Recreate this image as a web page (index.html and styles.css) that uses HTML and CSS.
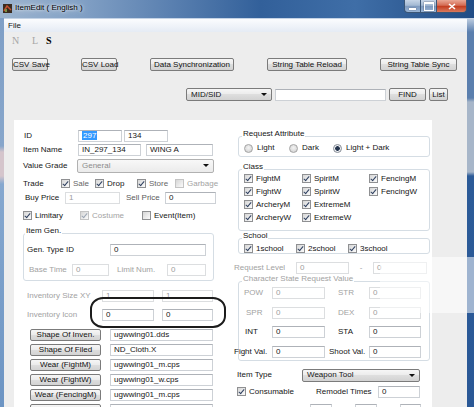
FILE: index.html
```html
<!DOCTYPE html>
<html lang="en">
<head>
<meta charset="UTF-8">
<title>ItemEdit ( English )</title>
<link rel="stylesheet" href="styles.css">
</head>
<body>
<div class="window">

  <div class="titlebar">
    <svg class="app-icon" width="9" height="9" viewBox="0 0 9 9">
      <rect width="9" height="9" fill="#3a2b1e"/>
      <path d="M1 7 L4 2 L8 6" stroke="#c4502e" stroke-width="1.5" fill="none"/>
      <rect x="2" y="5" width="2" height="3" fill="#7a8f42"/>
    </svg>
    <span class="title">ItemEdit ( English )</span>
    <div class="caption">
      <span class="cap cap-min"></span>
      <span class="cap cap-max"></span>
      <span class="cap cap-close">
        <svg width="8" height="7" viewBox="0 0 8 7"><path d="M1 1 L7 6 M7 1 L1 6" stroke="#fff" stroke-width="1.6"/></svg>
      </span>
    </div>
  </div>

  <div class="frame">
    <div class="edge-left"></div>
    <div class="client">
      <div class="menubar">File</div>
      <div class="form">

        <div class="nls"><span class="nls-off">N</span><span class="nls-off l">L</span><span class="nls-on">S</span></div>

        <div class="toolbar">
          <button class="btn w36">CSV Save</button>
          <button class="btn w36">CSV Load</button>
          <button class="btn w84">Data Synchronization</button>
          <button class="btn w80">String Table Reload</button>
          <button class="btn w77">String Table Sync</button>
        </div>

        <div class="search">
          <span class="combo w86">MID/SID</span>
          <span class="tb w111"></span>
          <button class="btn w37">FIND</button>
          <button class="btn w19">List</button>
        </div>

        <div class="panel">

          <!-- left column -->
          <div class="col">
            <div class="row">
              <span class="lbl w55 pl1">ID</span>
              <span class="tb w44"><span class="sel">297</span></span>
              <span class="tb w44 ml2">134</span>
            </div>
            <div class="row mt1">
              <span class="lbl w55">Item Name</span>
              <span class="tb w63">IN_297_134</span>
              <span class="tb w67 ml5">WING A</span>
            </div>
            <div class="row h15 mt2">
              <span class="lbl w54">Value Grade</span>
              <span class="combo dis w137 h14">General</span>
            </div>
            <div class="row mt4">
              <span class="lbl w38">Trade</span>
              <span class="chk soft w34"><i class="cb on"></i>Sale</span>
              <span class="chk w42"><i class="cb on"></i>Drop</span>
              <span class="chk soft w38"><i class="cb on"></i>Store</span>
              <span class="chk dis"><i class="cb"></i>Garbage</span>
            </div>
            <div class="row mt1">
              <span class="lbl w42 pl2">Buy Price</span>
              <span class="tb dis w55">1</span>
              <span class="lbl grey w39 ml6">Sell Price</span>
              <span class="tb w51">0</span>
            </div>
            <div class="row mt5">
              <span class="chk w57"><i class="cb on"></i>Limitary</span>
              <span class="chk dis w62"><i class="cb on"></i>Costume</span>
              <span class="chk"><i class="cb"></i>Event(Item)</span>
            </div>

            <fieldset class="group grp-l mt5">
              <legend>Item Gen.</legend>
              <div class="row mt4">
                <span class="lbl w83">Gen. Type ID</span>
                <span class="tb w96">0</span>
              </div>
              <div class="row mt7">
                <span class="lbl dim w45 pl2">Base Time</span>
                <span class="tb dis w37">0</span>
                <span class="lbl dim w50 ml8">Limit Num.</span>
                <span class="tb dis w39">0</span>
              </div>
            </fieldset>

            <div class="row mt8">
              <span class="lbl dim w79 pl4">Inventory Size XY</span>
              <span class="tb dis w52">1</span>
              <span class="tb dis w51 ml8">1</span>
            </div>
            <div class="row mt6">
              <span class="lbl dim w79 pl4">Inventory Icon</span>
              <span class="tb w52">0</span>
              <span class="tb w51 ml8">0</span>
            </div>

            <div class="row h12 mt8">
              <button class="btn h12 w71 ml7">Shape Of Inven.</button>
              <span class="tb w103 ml9">ugwwing01.dds</span>
            </div>
            <div class="row h12 mt3">
              <button class="btn h12 w71 ml7">Shape Of Filed</button>
              <span class="tb w103 ml9">ND_Cloth.X</span>
            </div>
            <div class="row h12 mt3">
              <button class="btn h12 w71 ml7">Wear (FightM)</button>
              <span class="tb w103 ml9">ugwwing01_m.cps</span>
            </div>
            <div class="row h12 mt3">
              <button class="btn h12 w71 ml7">Wear (FightW)</button>
              <span class="tb w103 ml9">ugwwing01_w.cps</span>
            </div>
            <div class="row h12 mt3">
              <button class="btn h12 w71 ml7">Wear (FencingM)</button>
              <span class="tb w103 ml9">ugwwing01_m.cps</span>
            </div>
            <div class="row h12 mt3">
              <button class="btn h12 w71 ml7"></button>
              <span class="tb w103 ml9"></span>
            </div>
          </div>

          <!-- right column -->
          <div class="col">
            <fieldset class="group grp-r mt1 pb3">
              <legend>Request Attribute</legend>
              <div class="row h10 mt1">
                <span class="chk w45"><i class="rb"></i>Light</span>
                <span class="chk w44"><i class="rb"></i>Dark</span>
                <span class="chk"><i class="rb on"></i>Light + Dark</span>
              </div>
            </fieldset>

            <fieldset class="group grp-r mt6 pb6">
              <legend>Class</legend>
              <div class="row up3">
                <span class="chk w58"><i class="cb on"></i>FightM</span>
                <span class="chk w67"><i class="cb on"></i>SpiritM</span>
                <span class="chk"><i class="cb on"></i>FencingM</span>
              </div>
              <div class="row">
                <span class="chk w58"><i class="cb on"></i>FightW</span>
                <span class="chk w67"><i class="cb on"></i>SpiritW</span>
                <span class="chk"><i class="cb on"></i>FencingW</span>
              </div>
              <div class="row">
                <span class="chk w58"><i class="cb on"></i>ArcheryM</span>
                <span class="chk w67"><i class="cb on"></i>ExtremeM</span>
              </div>
              <div class="row">
                <span class="chk w58"><i class="cb on"></i>ArcheryW</span>
                <span class="chk w67"><i class="cb on"></i>ExtremeW</span>
              </div>
            </fieldset>

            <fieldset class="group grp-r mt1 pb0">
              <legend>School</legend>
              <div class="row h9">
                <span class="chk w52"><i class="cb on"></i>1school</span>
                <span class="chk w52"><i class="cb on"></i>2school</span>
                <span class="chk"><i class="cb on"></i>3school</span>
              </div>
            </fieldset>

            <div class="row h12 mt8">
              <span class="lbl dim w62">Request Level</span>
              <span class="tb dis w53">0</span>
              <span class="lbl dim dash w24">-</span>
              <span class="tb dis w54">0</span>
            </div>

            <fieldset class="group grp-r mt1 pb2">
              <legend class="dim">Character State Request Value</legend>
              <div class="row h12">
                <span class="lbl dim w28">POW</span>
                <span class="tb dis w53">0</span>
                <span class="lbl dim w31 ml13">STR</span>
                <span class="tb dis w52">0</span>
              </div>
              <div class="row h12 mt8">
                <span class="lbl dim w28 pl2">SPR</span>
                <span class="tb dis w53">0</span>
                <span class="lbl dim w31 ml13">DEX</span>
                <span class="tb dis w52">0</span>
              </div>
              <div class="row h12 mt7">
                <span class="lbl w28 pl1">INT</span>
                <span class="tb w53">0</span>
                <span class="lbl w31 ml13">STA</span>
                <span class="tb w52">0</span>
              </div>
              <div class="row h12 mt8">
                <span class="lbl w38 out">Fight Val.</span>
                <span class="tb w53">0</span>
                <span class="lbl w40 ml4">Shoot Val.</span>
                <span class="tb w52">0</span>
              </div>
            </fieldset>

            <div class="row h14 mt7">
              <span class="lbl w68 pl3">Item Type</span>
              <span class="combo w118">Weapon Tool</span>
            </div>
            <div class="row mt3">
              <span class="chk w79 ml3"><i class="cb on"></i>Consumable</span>
              <span class="lbl w62">Remodel Times</span>
              <span class="tb w42">0</span>
            </div>
            <div class="row h12 mt6">
              <span class="tb w22 ml76">7</span>
              <span class="tb w22 ml23">0</span>
              <span class="tb w21 ml23">0</span>
            </div>
          </div>

        </div>
      </div>
    </div>
    <div class="edge-right"></div>
  </div>

  <!-- hand-drawn mark on the screenshot -->
  <div class="annotation"></div>
  <div class="watermark"></div>
</div>
</body>
</html>
```

FILE: styles.css
```css
*{
    box-sizing: border-box;
}

body{
    margin: 0;
    font-family: "Liberation Sans", Arial, sans-serif;
    font-size: 8px;
    line-height: 8px;
    color: #151515;
}

.window{
    position: relative;
    width: 474px;
    height: 407px;
    overflow: hidden;
    display: flex;
    flex-direction: column;
}

/* title bar */
.titlebar{
    height: 18px;
    flex: none;
    display: flex;
    align-items: flex-start;
    background: linear-gradient(90deg, #9cb4cf 0%, #84a2c6 16%, #5a80b0 36%, #32609a 55%, #3f6ea7 75%, #214c85 100%);
}

.app-icon{
    margin: 4px 0 0 3px;
}

.title{
    margin: 4px 0 0 3px;
    color: #000;
    text-shadow: 0 0 3px #fff, 0 0 6px rgba(255,255,255,0.8);
}

.caption{
    margin-left: auto;
    margin-right: 7px;
    display: flex;
}

.cap{
    height: 13px;
    display: flex;
    align-items: center;
    justify-content: center;
    border: 1px solid #3b5676;
    border-top: 0;
}

.cap-min,
.cap-max{
    background: linear-gradient(#c6d5e7, #a3b9d3 45%, #7d99be 50%, #98b4d6);
}

.cap-min{
    width: 17px;
    border-radius: 0 0 0 4px;
}

.cap-min::after{
    content: '';
    width: 7px;
    height: 2px;
    margin-top: 5px;
    background: #fff;
    box-shadow: 0 0 1px #223;
}

.cap-max{
    width: 16px;
    border-left: 0;
}

.cap-max::after{
    content: '';
    width: 8px;
    height: 6px;
    border: 1px solid #fff;
    border-top-width: 2px;
    box-shadow: 0 0 1px #223;
}

.cap-close{
    width: 30px;
    border-left: 0;
    border-radius: 0 0 4px 0;
    background: linear-gradient(#e9a795, #d46b53 45%, #c23a1d 50%, #d9795e);
}

/* frame + client */
.frame{
    flex: 1;
    display: flex;
    min-height: 0;
}

.edge-left{
    width: 4px;
    background: linear-gradient(#7f9fc6 0, #87a6cb 128px, #d5c5cc 134px, #d5c5cc 158px, #86a8cf 166px, #6c94c3 100%);
}

.edge-right{
    width: 7px;
    background: linear-gradient(#c2d0e2 0, #5b7fae 14px, #5b7fae 80px, #a7b6c9 84px, #a7b6c9 154px, #2c5b98 158px, #2a5896 100%);
}

.client{
    flex: 1;
    min-width: 0;
    display: flex;
    flex-direction: column;
}

.menubar{
    height: 14px;
    flex: none;
    padding: 3px 0 0 4px;
    border-top: 1px solid #c4d3e6;
    background: linear-gradient(#fbfcfe, #e5ebf4);
}

.form{
    flex: 1;
    min-height: 0;
    display: flex;
    flex-direction: column;
    background: #ededed;
}

.nls{
    height: 14px;
    flex: none;
    display: flex;
    padding: 4px 0 0 8px;
    font-family: "Liberation Serif", serif;
    font-size: 10px;
    line-height: 10px;
}

.nls span{
    width: 20px;
}

.nls .l{
    width: 14px;
}

.nls-off{
    color: #a6a6a6;
}

.nls-on{
    color: #000;
    font-weight: bold;
}

.toolbar{
    display: flex;
    gap: 33px;
    margin-top: 12px;
    padding-left: 8px;
}

.search{
    height: 13px;
    display: flex;
    align-items: center;
    gap: 3px;
    margin-top: 17px;
    padding-left: 182px;
}

/* controls */
.btn{
    height: 13px;
    flex: none;
    padding: 0;
    font: inherit;
    color: #111;
    white-space: nowrap;
    border: 1px solid #7b7b7b;
    border-radius: 2px;
    background: linear-gradient(#f6f6f6, #ececec 45%, #dedede 50%, #d2d2d2);
}

.tb{
    height: 12px;
    flex: none;
    display: flex;
    align-items: center;
    padding-left: 3px;
    white-space: nowrap;
    overflow: hidden;
    background: #fff;
    border: 1px solid #cdd1d6;
    border-top-color: #aeb2b8;
}

.tb.dis{
    color: #9d9d9d;
    border-color: #dcdee0;
}

.sel{
    padding: 0 1px;
    line-height: 9px;
    color: #fff;
    background: #3399ff;
}

.combo{
    height: 13px;
    flex: none;
    display: flex;
    align-items: center;
    padding: 0 4px;
    white-space: nowrap;
    border: 1px solid #7b7b7b;
    border-radius: 2px;
    background: linear-gradient(#f6f6f6, #ececec 45%, #dedede 50%, #d2d2d2);
}

.combo::after{
    content: '';
    margin-left: auto;
    border-style: solid;
    border-width: 3px 3px 0;
    border-color: #111 transparent transparent;
}

.combo.dis{
    color: #8c8c8c;
    border-color: #b1b1b1;
    background: linear-gradient(#f8f8f8, #ebebeb);
}

.chk{
    flex: none;
    display: flex;
    align-items: center;
    white-space: nowrap;
}

.cb{
    position: relative;
    width: 9px;
    height: 9px;
    flex: none;
    margin-right: 3px;
    border: 1px solid #8f9092;
    background: linear-gradient(135deg, #d6d6d6, #fbfbfb);
}

.cb.on::after{
    content: '';
    position: absolute;
    left: 2px;
    top: 0;
    width: 2px;
    height: 5px;
    border: solid #2f4060;
    border-width: 0 1.5px 1.5px 0;
    transform: rotate(40deg);
}

.chk.soft{
    color: #666;
}

.chk.dis{
    color: #a3a3a3;
}

.chk.dis .cb{
    border-color: #c4c4c4;
}

.chk.dis .cb.on::after{
    border-color: #9ba5b3;
}

.rb{
    width: 9px;
    height: 9px;
    flex: none;
    margin-right: 4px;
    border-radius: 50%;
    border: 1px solid #a4a4a4;
    background: radial-gradient(circle at 50% 40%, #f3f3f3, #cdcdcd);
}

.rb.on{
    border-color: #878d96;
    background: radial-gradient(circle, #25354d 0 2px, #eef0f3 2.6px);
}

/* panel */
.panel{
    flex: 1;
    width: 418px;
    margin: 19px 0 0 10px;
    padding: 9px 0 0 9px;
    display: grid;
    grid-template-columns: 211px 198px;
    align-items: start;
    background: #fff;
}

.col{
    display: flex;
    flex-direction: column;
}

.row{
    height: 13px;
    flex: none;
    display: flex;
    align-items: center;
}

.lbl{
    flex: none;
    white-space: nowrap;
}

.dim{
    color: #a2a2a2;
}

.grey{
    color: #5a5a5a;
}

.dash{
    text-align: center;
}

.out{
    margin-left: -10px;
}

.group{
    margin: 0;
    padding: 0 3px 4px;
    min-width: 0;
    border: 1px solid #d5dde4;
    border-radius: 3px;
}

.group legend{
    margin-left: -2px;
    padding: 0 1px 4px;
    line-height: 8px;
}

.grp-l{
    width: 191px;
}

.grp-r{
    width: 192px;
    margin-left: 4px;
    padding-left: 5px;
}

.up3{
    margin-top: -3px;
}

.annotation{
    position: absolute;
    left: 90px;
    top: 297px;
    width: 136px;
    height: 31px;
    border: 2px solid #1c1c1c;
    border-radius: 13px / 12px;
}

.watermark{
    position: absolute;
    left: 380px;
    top: 257px;
    width: 94px;
    height: 56px;
    background: rgba(255,255,255,0.55);
}

/* sizes */
.h9{ height: 9px; }
.h10{ height: 10px; }
.h12{ height: 12px; }
.h14{ height: 14px; }
.h15{ height: 15px; }

.mt1{ margin-top: 1px; }
.mt2{ margin-top: 2px; }
.mt3{ margin-top: 3px; }
.mt4{ margin-top: 4px; }
.mt5{ margin-top: 5px; }
.mt6{ margin-top: 6px; }
.mt7{ margin-top: 7px; }
.mt8{ margin-top: 8px; }

.pb0{ padding-bottom: 0; }
.pb2{ padding-bottom: 2px; }
.pb3{ padding-bottom: 3px; }
.pb6{ padding-bottom: 6px; }

.pl1{ padding-left: 1px; }
.pl2{ padding-left: 2px; }
.pl3{ padding-left: 3px; }
.pl4{ padding-left: 4px; }

.ml2{ margin-left: 2px; }
.ml3{ margin-left: 3px; }
.ml4{ margin-left: 4px; }
.ml5{ margin-left: 5px; }
.ml6{ margin-left: 6px; }
.ml7{ margin-left: 7px; }
.ml8{ margin-left: 8px; }
.ml9{ margin-left: 9px; }
.ml13{ margin-left: 13px; }
.ml23{ margin-left: 23px; }
.ml76{ margin-left: 76px; }

.w19{ width: 19px; }
.w21{ width: 21px; }
.w22{ width: 22px; }
.w24{ width: 24px; }
.w28{ width: 28px; }
.w31{ width: 31px; }
.w34{ width: 34px; }
.w36{ width: 36px; }
.w37{ width: 37px; }
.w38{ width: 38px; }
.w39{ width: 39px; }
.w40{ width: 40px; }
.w42{ width: 42px; }
.w44{ width: 44px; }
.w45{ width: 45px; }
.w50{ width: 50px; }
.w51{ width: 51px; }
.w52{ width: 52px; }
.w53{ width: 53px; }
.w54{ width: 54px; }
.w55{ width: 55px; }
.w57{ width: 57px; }
.w58{ width: 58px; }
.w62{ width: 62px; }
.w63{ width: 63px; }
.w67{ width: 67px; }
.w68{ width: 68px; }
.w71{ width: 71px; }
.w77{ width: 77px; }
.w79{ width: 79px; }
.w80{ width: 80px; }
.w83{ width: 83px; }
.w84{ width: 84px; }
.w86{ width: 86px; }
.w96{ width: 96px; }
.w103{ width: 103px; }
.w111{ width: 111px; }
.w118{ width: 118px; }
.w137{ width: 137px; }
```
